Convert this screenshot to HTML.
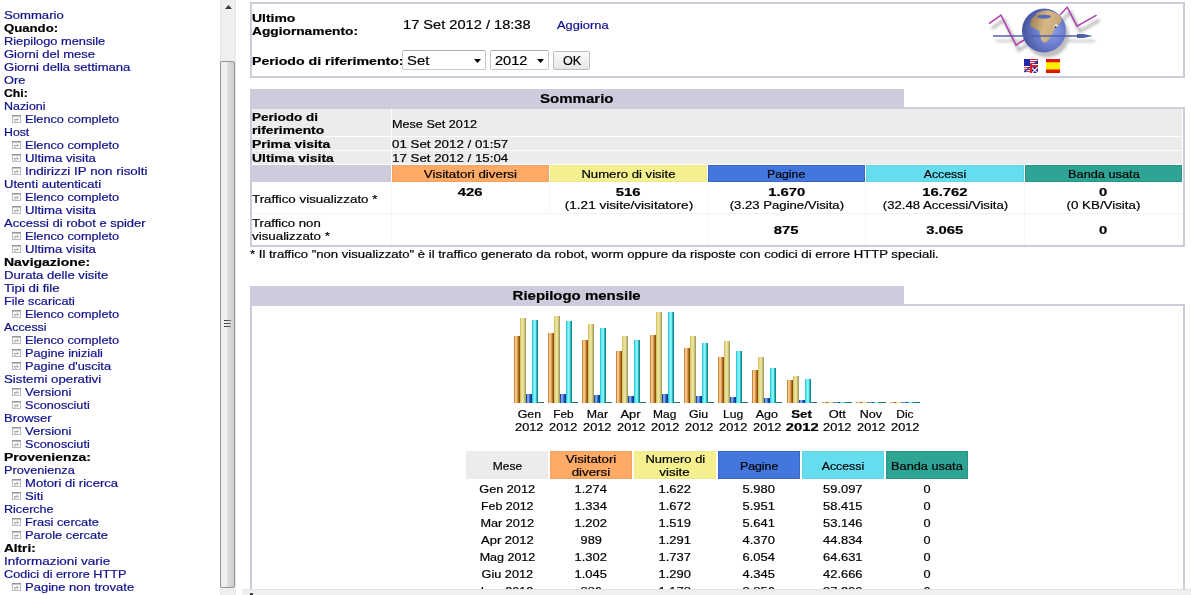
<!DOCTYPE html>
<html><head><meta charset="utf-8"><title>AWStats</title>
<style>
html,body{margin:0;padding:0;}
body{width:1191px;height:595px;overflow:hidden;position:relative;background:#fff;font-family:"Liberation Sans",sans-serif;}
.t{position:absolute;white-space:nowrap;line-height:13px;font-family:"Liberation Sans",sans-serif;}
.r{position:absolute;}
.t span{display:inline-block;-webkit-text-stroke:0.2px currentColor;}
.ic{position:absolute;width:9px;height:8px;}
</style></head><body>

<div class="t" style="left:4px;top:9.39px;font-size:11px;color:#10108a;"><span style="transform:scaleX(1.191);transform-origin:left">Sommario</span></div>
<div class="t" style="left:4px;top:22.39px;font-size:11px;color:#000;font-weight:bold;"><span style="transform:scaleX(1.196);transform-origin:left">Quando:</span></div>
<div class="t" style="left:4px;top:35.39px;font-size:11px;color:#10108a;"><span style="transform:scaleX(1.165);transform-origin:left">Riepilogo mensile</span></div>
<div class="t" style="left:4px;top:48.39px;font-size:11px;color:#10108a;"><span style="transform:scaleX(1.182);transform-origin:left">Giorni del mese</span></div>
<div class="t" style="left:4px;top:61.39px;font-size:11px;color:#10108a;"><span style="transform:scaleX(1.188);transform-origin:left">Giorni della settimana</span></div>
<div class="t" style="left:4px;top:74.39px;font-size:11px;color:#10108a;"><span style="transform:scaleX(1.159);transform-origin:left">Ore</span></div>
<div class="t" style="left:4px;top:87.39px;font-size:11px;color:#000;font-weight:bold;"><span style="transform:scaleX(1.109);transform-origin:left">Chi:</span></div>
<div class="t" style="left:4px;top:100.39px;font-size:11px;color:#10108a;"><span style="transform:scaleX(1.131);transform-origin:left">Nazioni</span></div>
<svg class="ic" style="left:12px;top:115px" width="9" height="8" viewBox="0 0 9 8"><rect x="0.5" y="0.5" width="8" height="7" fill="#fafafa" stroke="#bdbdbd"/><rect x="0" y="0" width="9" height="1.5" fill="#959595"/><path d="M2,4.5 H6.2 M4.6,3 L6.4,4.5 L4.6,6 M3,4.5 V7" stroke="#a8a8a8" stroke-width="0.9" fill="none"/></svg>
<div class="t" style="left:25px;top:113.39px;font-size:11px;color:#10108a;"><span style="transform:scaleX(1.157);transform-origin:left">Elenco completo</span></div>
<div class="t" style="left:4px;top:126.39px;font-size:11px;color:#10108a;"><span style="transform:scaleX(1.118);transform-origin:left">Host</span></div>
<svg class="ic" style="left:12px;top:141px" width="9" height="8" viewBox="0 0 9 8"><rect x="0.5" y="0.5" width="8" height="7" fill="#fafafa" stroke="#bdbdbd"/><rect x="0" y="0" width="9" height="1.5" fill="#959595"/><path d="M2,4.5 H6.2 M4.6,3 L6.4,4.5 L4.6,6 M3,4.5 V7" stroke="#a8a8a8" stroke-width="0.9" fill="none"/></svg>
<div class="t" style="left:25px;top:139.39px;font-size:11px;color:#10108a;"><span style="transform:scaleX(1.157);transform-origin:left">Elenco completo</span></div>
<svg class="ic" style="left:12px;top:154px" width="9" height="8" viewBox="0 0 9 8"><rect x="0.5" y="0.5" width="8" height="7" fill="#fafafa" stroke="#bdbdbd"/><rect x="0" y="0" width="9" height="1.5" fill="#959595"/><path d="M2,4.5 H6.2 M4.6,3 L6.4,4.5 L4.6,6 M3,4.5 V7" stroke="#a8a8a8" stroke-width="0.9" fill="none"/></svg>
<div class="t" style="left:25px;top:152.39px;font-size:11px;color:#10108a;"><span style="transform:scaleX(1.195);transform-origin:left">Ultima visita</span></div>
<svg class="ic" style="left:12px;top:167px" width="9" height="8" viewBox="0 0 9 8"><rect x="0.5" y="0.5" width="8" height="7" fill="#fafafa" stroke="#bdbdbd"/><rect x="0" y="0" width="9" height="1.5" fill="#959595"/><path d="M2,4.5 H6.2 M4.6,3 L6.4,4.5 L4.6,6 M3,4.5 V7" stroke="#a8a8a8" stroke-width="0.9" fill="none"/></svg>
<div class="t" style="left:25px;top:165.39px;font-size:11px;color:#10108a;"><span style="transform:scaleX(1.216);transform-origin:left">Indirizzi IP non risolti</span></div>
<div class="t" style="left:4px;top:178.39px;font-size:11px;color:#10108a;"><span style="transform:scaleX(1.185);transform-origin:left">Utenti autenticati</span></div>
<svg class="ic" style="left:12px;top:193px" width="9" height="8" viewBox="0 0 9 8"><rect x="0.5" y="0.5" width="8" height="7" fill="#fafafa" stroke="#bdbdbd"/><rect x="0" y="0" width="9" height="1.5" fill="#959595"/><path d="M2,4.5 H6.2 M4.6,3 L6.4,4.5 L4.6,6 M3,4.5 V7" stroke="#a8a8a8" stroke-width="0.9" fill="none"/></svg>
<div class="t" style="left:25px;top:191.39px;font-size:11px;color:#10108a;"><span style="transform:scaleX(1.157);transform-origin:left">Elenco completo</span></div>
<svg class="ic" style="left:12px;top:206px" width="9" height="8" viewBox="0 0 9 8"><rect x="0.5" y="0.5" width="8" height="7" fill="#fafafa" stroke="#bdbdbd"/><rect x="0" y="0" width="9" height="1.5" fill="#959595"/><path d="M2,4.5 H6.2 M4.6,3 L6.4,4.5 L4.6,6 M3,4.5 V7" stroke="#a8a8a8" stroke-width="0.9" fill="none"/></svg>
<div class="t" style="left:25px;top:204.39px;font-size:11px;color:#10108a;"><span style="transform:scaleX(1.195);transform-origin:left">Ultima visita</span></div>
<div class="t" style="left:4px;top:217.39px;font-size:11px;color:#10108a;"><span style="transform:scaleX(1.182);transform-origin:left">Accessi di robot e spider</span></div>
<svg class="ic" style="left:12px;top:232px" width="9" height="8" viewBox="0 0 9 8"><rect x="0.5" y="0.5" width="8" height="7" fill="#fafafa" stroke="#bdbdbd"/><rect x="0" y="0" width="9" height="1.5" fill="#959595"/><path d="M2,4.5 H6.2 M4.6,3 L6.4,4.5 L4.6,6 M3,4.5 V7" stroke="#a8a8a8" stroke-width="0.9" fill="none"/></svg>
<div class="t" style="left:25px;top:230.39px;font-size:11px;color:#10108a;"><span style="transform:scaleX(1.157);transform-origin:left">Elenco completo</span></div>
<svg class="ic" style="left:12px;top:245px" width="9" height="8" viewBox="0 0 9 8"><rect x="0.5" y="0.5" width="8" height="7" fill="#fafafa" stroke="#bdbdbd"/><rect x="0" y="0" width="9" height="1.5" fill="#959595"/><path d="M2,4.5 H6.2 M4.6,3 L6.4,4.5 L4.6,6 M3,4.5 V7" stroke="#a8a8a8" stroke-width="0.9" fill="none"/></svg>
<div class="t" style="left:25px;top:243.39px;font-size:11px;color:#10108a;"><span style="transform:scaleX(1.195);transform-origin:left">Ultima visita</span></div>
<div class="t" style="left:4px;top:256.39px;font-size:11px;color:#000;font-weight:bold;"><span style="transform:scaleX(1.271);transform-origin:left">Navigazione:</span></div>
<div class="t" style="left:4px;top:269.39px;font-size:11px;color:#10108a;"><span style="transform:scaleX(1.192);transform-origin:left">Durata delle visite</span></div>
<div class="t" style="left:4px;top:282.39px;font-size:11px;color:#10108a;"><span style="transform:scaleX(1.208);transform-origin:left">Tipi di file</span></div>
<div class="t" style="left:4px;top:295.39px;font-size:11px;color:#10108a;"><span style="transform:scaleX(1.159);transform-origin:left">File scaricati</span></div>
<svg class="ic" style="left:12px;top:310px" width="9" height="8" viewBox="0 0 9 8"><rect x="0.5" y="0.5" width="8" height="7" fill="#fafafa" stroke="#bdbdbd"/><rect x="0" y="0" width="9" height="1.5" fill="#959595"/><path d="M2,4.5 H6.2 M4.6,3 L6.4,4.5 L4.6,6 M3,4.5 V7" stroke="#a8a8a8" stroke-width="0.9" fill="none"/></svg>
<div class="t" style="left:25px;top:308.39px;font-size:11px;color:#10108a;"><span style="transform:scaleX(1.157);transform-origin:left">Elenco completo</span></div>
<div class="t" style="left:4px;top:321.39px;font-size:11px;color:#10108a;"><span style="transform:scaleX(1.121);transform-origin:left">Accessi</span></div>
<svg class="ic" style="left:12px;top:336px" width="9" height="8" viewBox="0 0 9 8"><rect x="0.5" y="0.5" width="8" height="7" fill="#fafafa" stroke="#bdbdbd"/><rect x="0" y="0" width="9" height="1.5" fill="#959595"/><path d="M2,4.5 H6.2 M4.6,3 L6.4,4.5 L4.6,6 M3,4.5 V7" stroke="#a8a8a8" stroke-width="0.9" fill="none"/></svg>
<div class="t" style="left:25px;top:334.39px;font-size:11px;color:#10108a;"><span style="transform:scaleX(1.157);transform-origin:left">Elenco completo</span></div>
<svg class="ic" style="left:12px;top:349px" width="9" height="8" viewBox="0 0 9 8"><rect x="0.5" y="0.5" width="8" height="7" fill="#fafafa" stroke="#bdbdbd"/><rect x="0" y="0" width="9" height="1.5" fill="#959595"/><path d="M2,4.5 H6.2 M4.6,3 L6.4,4.5 L4.6,6 M3,4.5 V7" stroke="#a8a8a8" stroke-width="0.9" fill="none"/></svg>
<div class="t" style="left:25px;top:347.39px;font-size:11px;color:#10108a;"><span style="transform:scaleX(1.158);transform-origin:left">Pagine iniziali</span></div>
<svg class="ic" style="left:12px;top:362px" width="9" height="8" viewBox="0 0 9 8"><rect x="0.5" y="0.5" width="8" height="7" fill="#fafafa" stroke="#bdbdbd"/><rect x="0" y="0" width="9" height="1.5" fill="#959595"/><path d="M2,4.5 H6.2 M4.6,3 L6.4,4.5 L4.6,6 M3,4.5 V7" stroke="#a8a8a8" stroke-width="0.9" fill="none"/></svg>
<div class="t" style="left:25px;top:360.39px;font-size:11px;color:#10108a;"><span style="transform:scaleX(1.158);transform-origin:left">Pagine d&#x27;uscita</span></div>
<div class="t" style="left:4px;top:373.39px;font-size:11px;color:#10108a;"><span style="transform:scaleX(1.204);transform-origin:left">Sistemi operativi</span></div>
<svg class="ic" style="left:12px;top:388px" width="9" height="8" viewBox="0 0 9 8"><rect x="0.5" y="0.5" width="8" height="7" fill="#fafafa" stroke="#bdbdbd"/><rect x="0" y="0" width="9" height="1.5" fill="#959595"/><path d="M2,4.5 H6.2 M4.6,3 L6.4,4.5 L4.6,6 M3,4.5 V7" stroke="#a8a8a8" stroke-width="0.9" fill="none"/></svg>
<div class="t" style="left:25px;top:386.39px;font-size:11px;color:#10108a;"><span style="transform:scaleX(1.189);transform-origin:left">Versioni</span></div>
<svg class="ic" style="left:12px;top:401px" width="9" height="8" viewBox="0 0 9 8"><rect x="0.5" y="0.5" width="8" height="7" fill="#fafafa" stroke="#bdbdbd"/><rect x="0" y="0" width="9" height="1.5" fill="#959595"/><path d="M2,4.5 H6.2 M4.6,3 L6.4,4.5 L4.6,6 M3,4.5 V7" stroke="#a8a8a8" stroke-width="0.9" fill="none"/></svg>
<div class="t" style="left:25px;top:399.39px;font-size:11px;color:#10108a;"><span style="transform:scaleX(1.151);transform-origin:left">Sconosciuti</span></div>
<div class="t" style="left:4px;top:412.39px;font-size:11px;color:#10108a;"><span style="transform:scaleX(1.179);transform-origin:left">Browser</span></div>
<svg class="ic" style="left:12px;top:427px" width="9" height="8" viewBox="0 0 9 8"><rect x="0.5" y="0.5" width="8" height="7" fill="#fafafa" stroke="#bdbdbd"/><rect x="0" y="0" width="9" height="1.5" fill="#959595"/><path d="M2,4.5 H6.2 M4.6,3 L6.4,4.5 L4.6,6 M3,4.5 V7" stroke="#a8a8a8" stroke-width="0.9" fill="none"/></svg>
<div class="t" style="left:25px;top:425.39px;font-size:11px;color:#10108a;"><span style="transform:scaleX(1.189);transform-origin:left">Versioni</span></div>
<svg class="ic" style="left:12px;top:440px" width="9" height="8" viewBox="0 0 9 8"><rect x="0.5" y="0.5" width="8" height="7" fill="#fafafa" stroke="#bdbdbd"/><rect x="0" y="0" width="9" height="1.5" fill="#959595"/><path d="M2,4.5 H6.2 M4.6,3 L6.4,4.5 L4.6,6 M3,4.5 V7" stroke="#a8a8a8" stroke-width="0.9" fill="none"/></svg>
<div class="t" style="left:25px;top:438.39px;font-size:11px;color:#10108a;"><span style="transform:scaleX(1.151);transform-origin:left">Sconosciuti</span></div>
<div class="t" style="left:4px;top:451.39px;font-size:11px;color:#000;font-weight:bold;"><span style="transform:scaleX(1.268);transform-origin:left">Provenienza:</span></div>
<div class="t" style="left:4px;top:464.39px;font-size:11px;color:#10108a;"><span style="transform:scaleX(1.158);transform-origin:left">Provenienza</span></div>
<svg class="ic" style="left:12px;top:479px" width="9" height="8" viewBox="0 0 9 8"><rect x="0.5" y="0.5" width="8" height="7" fill="#fafafa" stroke="#bdbdbd"/><rect x="0" y="0" width="9" height="1.5" fill="#959595"/><path d="M2,4.5 H6.2 M4.6,3 L6.4,4.5 L4.6,6 M3,4.5 V7" stroke="#a8a8a8" stroke-width="0.9" fill="none"/></svg>
<div class="t" style="left:25px;top:477.39px;font-size:11px;color:#10108a;"><span style="transform:scaleX(1.190);transform-origin:left">Motori di ricerca</span></div>
<svg class="ic" style="left:12px;top:492px" width="9" height="8" viewBox="0 0 9 8"><rect x="0.5" y="0.5" width="8" height="7" fill="#fafafa" stroke="#bdbdbd"/><rect x="0" y="0" width="9" height="1.5" fill="#959595"/><path d="M2,4.5 H6.2 M4.6,3 L6.4,4.5 L4.6,6 M3,4.5 V7" stroke="#a8a8a8" stroke-width="0.9" fill="none"/></svg>
<div class="t" style="left:25px;top:490.39px;font-size:11px;color:#10108a;"><span style="transform:scaleX(1.192);transform-origin:left">Siti</span></div>
<div class="t" style="left:4px;top:503.39px;font-size:11px;color:#10108a;"><span style="transform:scaleX(1.142);transform-origin:left">Ricerche</span></div>
<svg class="ic" style="left:12px;top:518px" width="9" height="8" viewBox="0 0 9 8"><rect x="0.5" y="0.5" width="8" height="7" fill="#fafafa" stroke="#bdbdbd"/><rect x="0" y="0" width="9" height="1.5" fill="#959595"/><path d="M2,4.5 H6.2 M4.6,3 L6.4,4.5 L4.6,6 M3,4.5 V7" stroke="#a8a8a8" stroke-width="0.9" fill="none"/></svg>
<div class="t" style="left:25px;top:516.39px;font-size:11px;color:#10108a;"><span style="transform:scaleX(1.162);transform-origin:left">Frasi cercate</span></div>
<svg class="ic" style="left:12px;top:531px" width="9" height="8" viewBox="0 0 9 8"><rect x="0.5" y="0.5" width="8" height="7" fill="#fafafa" stroke="#bdbdbd"/><rect x="0" y="0" width="9" height="1.5" fill="#959595"/><path d="M2,4.5 H6.2 M4.6,3 L6.4,4.5 L4.6,6 M3,4.5 V7" stroke="#a8a8a8" stroke-width="0.9" fill="none"/></svg>
<div class="t" style="left:25px;top:529.39px;font-size:11px;color:#10108a;"><span style="transform:scaleX(1.169);transform-origin:left">Parole cercate</span></div>
<div class="t" style="left:4px;top:542.39px;font-size:11px;color:#000;font-weight:bold;"><span style="transform:scaleX(1.234);transform-origin:left">Altri:</span></div>
<div class="t" style="left:4px;top:555.39px;font-size:11px;color:#10108a;"><span style="transform:scaleX(1.224);transform-origin:left">Informazioni varie</span></div>
<div class="t" style="left:4px;top:568.39px;font-size:11px;color:#10108a;"><span style="transform:scaleX(1.151);transform-origin:left">Codici di errore HTTP</span></div>
<svg class="ic" style="left:12px;top:583px" width="9" height="8" viewBox="0 0 9 8"><rect x="0.5" y="0.5" width="8" height="7" fill="#fafafa" stroke="#bdbdbd"/><rect x="0" y="0" width="9" height="1.5" fill="#959595"/><path d="M2,4.5 H6.2 M4.6,3 L6.4,4.5 L4.6,6 M3,4.5 V7" stroke="#a8a8a8" stroke-width="0.9" fill="none"/></svg>
<div class="t" style="left:25px;top:581.39px;font-size:11px;color:#10108a;"><span style="transform:scaleX(1.182);transform-origin:left">Pagine non trovate</span></div>
<div class="r" style="left:220px;top:0;width:16px;height:595px;background:linear-gradient(90deg,#e3e3e3 0,#eeeeee 2px,#f0f0f0 14px,#e8e8e8 16px);"></div>
<svg class="r" style="left:220px;top:0" width="16" height="14"><polygon points="5,9 12,9 8.5,5" fill="#3c3c3c"/></svg>
<div class="r" style="left:220px;top:61px;width:13px;height:525px;border:1px solid #949494;border-radius:2px;background:linear-gradient(90deg,#ececec 0,#f2f2f2 40%,#d9d9dc 55%,#cfd0d4 100%);"></div>
<div class="r" style="left:224px;top:320px;width:7px;height:1px;background:linear-gradient(90deg,#303030,#606060 60%,#8a8a8a);"></div>
<div class="r" style="left:224px;top:323px;width:7px;height:1px;background:linear-gradient(90deg,#303030,#606060 60%,#8a8a8a);"></div>
<div class="r" style="left:224px;top:326px;width:7px;height:1px;background:linear-gradient(90deg,#303030,#606060 60%,#8a8a8a);"></div>
<div class="r" style="left:250px;top:2px;width:931px;height:72px;border:2px solid #CCCCDD;"></div>
<div class="t" style="left:252px;top:11.69px;font-size:11px;color:#000;font-weight:bold;"><span style="transform:scaleX(1.264);transform-origin:left">Ultimo</span></div>
<div class="t" style="left:252px;top:24.69px;font-size:11px;color:#000;font-weight:bold;"><span style="transform:scaleX(1.248);transform-origin:left">Aggiornamento:</span></div>
<div class="t" style="left:402.5px;top:19.34px;font-size:12px;color:#000;"><span style="transform:scaleX(1.218);transform-origin:left">17 Set 2012 / 18:38</span></div>
<div class="t" style="left:557px;top:19.19px;font-size:11px;color:#10108a;"><span style="transform:scaleX(1.171);transform-origin:left">Aggiorna</span></div>
<div class="t" style="left:252px;top:54.69px;font-size:11px;color:#000;font-weight:bold;"><span style="transform:scaleX(1.285);transform-origin:left">Periodo di riferimento:</span></div>
<div class="r" style="left:402px;top:50px;width:82px;height:18px;border:1px solid #c9c9c9;border-top-color:#acacac;border-radius:2px;background:#fff;"></div>
<div class="t" style="left:407px;top:54.00px;font-size:13px;color:#000;"><span style="transform:scaleX(1.141);transform-origin:left">Set</span></div>
<svg class="r" style="left:474px;top:58px" width="8" height="6"><polygon points="0,1 7,1 3.5,5" fill="#000"/></svg>
<div class="r" style="left:490px;top:50px;width:57px;height:18px;border:1px solid #c9c9c9;border-top-color:#acacac;border-radius:2px;background:#fff;"></div>
<div class="t" style="left:495px;top:54.00px;font-size:13px;color:#000;"><span style="transform:scaleX(1.119);transform-origin:left">2012</span></div>
<svg class="r" style="left:537px;top:58px" width="8" height="6"><polygon points="0,1 7,1 3.5,5" fill="#000"/></svg>
<div class="r" style="left:553px;top:51px;width:35px;height:17px;border:1px solid #bdbdbd;border-radius:2px;background:linear-gradient(#fbfbfb,#f0f0f0 50%,#e6e6e6);"></div>
<div class="t" style="left:563px;top:54.00px;font-size:13px;color:#000;"><span style="transform:scaleX(0.974);transform-origin:left">OK</span></div>
<svg class="r" style="left:985px;top:3px" width="118" height="56" viewBox="0 0 118 56">
<defs>
<radialGradient id="gl" cx="0.66" cy="0.52" r="0.78"><stop offset="0" stop-color="#8c9ef0"/><stop offset="0.5" stop-color="#6676c6"/><stop offset="1" stop-color="#36438a"/></radialGradient>
<linearGradient id="ld" x1="0" y1="0" x2="1" y2="0.3"><stop offset="0" stop-color="#98784c"/><stop offset="0.55" stop-color="#d6b888"/><stop offset="1" stop-color="#c4a678"/></linearGradient>
<filter id="bl" x="-20%" y="-30%" width="140%" height="160%"><feGaussianBlur stdDeviation="1.8"/></filter>
</defs>
<g opacity="0.45" filter="url(#bl)" transform="translate(3,5)">
<polyline points="4,20.6 16,12.1 31,42.2 39,37 75,12.1 82.2,4.2 92,23.2 111.6,12.1" fill="none" stroke="#606060" stroke-width="3"/>
<circle cx="59" cy="27.5" r="22" fill="#707070"/>
<line x1="8" y1="33" x2="107" y2="33" stroke="#707070" stroke-width="2"/>
</g>
<polyline points="4,20.6 16,12.1 31,42.2 39,37" fill="none" stroke="#b040b0" stroke-width="1.5"/>
<polyline points="75,12.1 82.2,4.2 92,23.2 111.6,12.1" fill="none" stroke="#b040b0" stroke-width="1.5"/>
<circle cx="59" cy="27.5" r="22" fill="url(#gl)"/>
<polygon points="50.7,12.8 52.5,10.1 57.5,8.3 62.9,7.8 68.4,9.2 73.8,11.9 76.6,15.5 75.6,18.2 72,23.7 69.3,25.5 68.4,28.2 65.7,33.7 62,38.2 59.3,39.6 57.5,38.2 55.7,33.7 54.8,28.2 51.1,25.5 46.6,23.7 45.7,21 46.6,16.4" fill="url(#ld)" stroke="url(#ld)" stroke-width="0.8" stroke-linejoin="round"/>
<ellipse cx="59" cy="13.6" rx="7" ry="1.9" fill="#5668b8"/>
<circle cx="71.1" cy="23" r="1.8" fill="#eef0ff" opacity="0.9"/>
<circle cx="70.8" cy="24" r="0.9" fill="#303050"/>
<line x1="8" y1="33" x2="100" y2="33" stroke="#5060a8" stroke-width="1.7"/>
<polygon points="92,31 98.5,31 107.7,33 98.5,35 92,35" fill="#5060a8"/>
</svg>
<svg class="r" style="left:1024px;top:59px" width="14" height="14" viewBox="0 0 14 14">
<rect width="14" height="14" fill="#f6f0f4"/>
<rect x="6" y="0" width="8" height="1" fill="#d02838"/><rect x="6" y="2" width="8" height="1" fill="#d02838"/><rect x="6" y="4" width="8" height="1" fill="#d02838"/>
<polygon points="9,5 14,1 14,5" fill="#2a2a98"/>
<rect x="7" y="8" width="7" height="6" fill="#2a2a98"/>
<path d="M7,8 L14,14 M14,8 L8,14" stroke="#f4e8f0" stroke-width="1.3"/>
<rect x="0" y="8" width="6" height="1" fill="#d04858"/><rect x="0" y="10" width="6" height="1" fill="#d04858"/><rect x="0" y="12" width="6" height="1" fill="#d04858"/>
<path d="M0,13 L6,8" stroke="#2a2a98" stroke-width="1.2"/>
<rect x="0" y="0" width="6" height="7" fill="#2424a8"/>
<rect x="6" y="6" width="8" height="2" fill="#e01c28"/>
<rect x="6" y="5" width="2" height="9" fill="#e01c28"/>
</svg>
<svg class="r" style="left:1046px;top:59px" width="14" height="14" viewBox="0 0 14 14">
<rect width="14" height="14" fill="#e01808"/><rect y="3.3" width="14" height="7.2" fill="#fff000"/>
</svg>
<div class="r" style="left:250px;top:89px;width:654px;height:18px;background:#CCCCDD;"></div>
<div class="t" style="left:250px;top:92.00px;font-size:13px;color:#000;font-weight:bold;width:654px;text-align:center;"><span style="transform:scaleX(1.156);transform-origin:center">Sommario</span></div>
<div class="r" style="left:250px;top:107px;width:931px;height:136px;border:2px solid #CCCCDD;background:#fff;"></div>
<div class="r" style="left:252px;top:109px;width:139px;height:27px;background:#ECECEC;"></div>
<div class="r" style="left:392px;top:109px;width:790px;height:27px;background:#ECECEC;"></div>
<div class="r" style="left:252px;top:137px;width:139px;height:13px;background:#ECECEC;"></div>
<div class="r" style="left:392px;top:137px;width:790px;height:13px;background:#ECECEC;"></div>
<div class="r" style="left:252px;top:151px;width:139px;height:13px;background:#ECECEC;"></div>
<div class="r" style="left:392px;top:151px;width:790px;height:13px;background:#ECECEC;"></div>
<div class="r" style="left:252px;top:165px;width:139px;height:17px;background:#CCCCDD;box-shadow:inset 0 0 0 1px rgba(0,0,0,0);"></div>
<div class="r" style="left:392px;top:165px;width:157px;height:17px;background:#FFAA66;box-shadow:inset 0 0 0 1px rgba(0,0,0,0.05);"></div>
<div class="r" style="left:550px;top:165px;width:157px;height:17px;background:#F4F090;box-shadow:inset 0 0 0 1px rgba(0,0,0,0.02);"></div>
<div class="r" style="left:708px;top:165px;width:157px;height:17px;background:#4477DD;box-shadow:inset 0 0 0 1px rgba(0,0,0,0.13);"></div>
<div class="r" style="left:866px;top:165px;width:158px;height:17px;background:#66DDEE;box-shadow:inset 0 0 0 1px rgba(0,0,0,0.04);"></div>
<div class="r" style="left:1025px;top:165px;width:157px;height:17px;background:#2EA495;box-shadow:inset 0 0 0 1px rgba(0,0,0,0.1);"></div>
<div class="r" style="left:252px;top:213px;width:930px;height:1px;background:#F3F3F3;"></div>
<div class="r" style="left:391px;top:182px;width:1px;height:31px;background:#F6F6F6;"></div>
<div class="r" style="left:549px;top:182px;width:1px;height:31px;background:#F6F6F6;"></div>
<div class="r" style="left:707px;top:182px;width:1px;height:31px;background:#F6F6F6;"></div>
<div class="r" style="left:865px;top:182px;width:1px;height:31px;background:#F6F6F6;"></div>
<div class="r" style="left:1024px;top:182px;width:1px;height:31px;background:#F6F6F6;"></div>
<div class="r" style="left:391px;top:214px;width:1px;height:31px;background:#F6F6F6;"></div>
<div class="r" style="left:707px;top:214px;width:1px;height:31px;background:#F6F6F6;"></div>
<div class="r" style="left:865px;top:214px;width:1px;height:31px;background:#F6F6F6;"></div>
<div class="r" style="left:1024px;top:214px;width:1px;height:31px;background:#F6F6F6;"></div>
<div class="t" style="left:252px;top:111.19px;font-size:11px;color:#000;font-weight:bold;"><span style="transform:scaleX(1.225);transform-origin:left">Periodo di</span></div>
<div class="t" style="left:252px;top:124.19px;font-size:11px;color:#000;font-weight:bold;"><span style="transform:scaleX(1.255);transform-origin:left">riferimento</span></div>
<div class="t" style="left:392px;top:117.69px;font-size:11px;color:#000;"><span style="transform:scaleX(1.148);transform-origin:left">Mese Set 2012</span></div>
<div class="t" style="left:252px;top:138.19px;font-size:11px;color:#000;font-weight:bold;"><span style="transform:scaleX(1.265);transform-origin:left">Prima visita</span></div>
<div class="t" style="left:392px;top:137.69px;font-size:11px;color:#000;"><span style="transform:scaleX(1.210);transform-origin:left">01 Set 2012 / 01:57</span></div>
<div class="t" style="left:252px;top:152.19px;font-size:11px;color:#000;font-weight:bold;"><span style="transform:scaleX(1.262);transform-origin:left">Ultima visita</span></div>
<div class="t" style="left:392px;top:151.69px;font-size:11px;color:#000;"><span style="transform:scaleX(1.210);transform-origin:left">17 Set 2012 / 15:04</span></div>
<div class="t" style="left:392px;top:167.99px;font-size:11px;color:#000;width:157px;text-align:center;"><span style="transform:scaleX(1.212);transform-origin:center">Visitatori diversi</span></div>
<div class="t" style="left:550px;top:167.99px;font-size:11px;color:#000;width:157px;text-align:center;"><span style="transform:scaleX(1.193);transform-origin:center">Numero di visite</span></div>
<div class="t" style="left:708px;top:167.99px;font-size:11px;color:#000;width:157px;text-align:center;"><span style="transform:scaleX(1.122);transform-origin:center">Pagine</span></div>
<div class="t" style="left:866px;top:167.99px;font-size:11px;color:#000;width:158px;text-align:center;"><span style="transform:scaleX(1.121);transform-origin:center">Accessi</span></div>
<div class="t" style="left:1025px;top:167.99px;font-size:11px;color:#000;width:157px;text-align:center;"><span style="transform:scaleX(1.162);transform-origin:center">Banda usata</span></div>
<div class="t" style="left:252px;top:192.69px;font-size:11px;color:#000;"><span style="transform:scaleX(1.214);transform-origin:left">Traffico visualizzato *</span></div>
<div class="t" style="left:392px;top:185.69px;font-size:11px;color:#000;font-weight:bold;width:157px;text-align:center;"><span style="transform:scaleX(1.345);transform-origin:center">426</span></div>
<div class="t" style="left:550px;top:185.69px;font-size:11px;color:#000;font-weight:bold;width:157px;text-align:center;"><span style="transform:scaleX(1.345);transform-origin:center">516</span></div>
<div class="t" style="left:550px;top:198.69px;font-size:11px;color:#000;width:157px;text-align:center;"><span style="transform:scaleX(1.236);transform-origin:center">(1.21 visite/visitatore)</span></div>
<div class="t" style="left:708px;top:185.69px;font-size:11px;color:#000;font-weight:bold;width:157px;text-align:center;"><span style="transform:scaleX(1.345);transform-origin:center">1.670</span></div>
<div class="t" style="left:708px;top:198.69px;font-size:11px;color:#000;width:157px;text-align:center;"><span style="transform:scaleX(1.193);transform-origin:center">(3.23 Pagine/Visita)</span></div>
<div class="t" style="left:866px;top:185.69px;font-size:11px;color:#000;font-weight:bold;width:158px;text-align:center;"><span style="transform:scaleX(1.345);transform-origin:center">16.762</span></div>
<div class="t" style="left:866px;top:198.69px;font-size:11px;color:#000;width:158px;text-align:center;"><span style="transform:scaleX(1.195);transform-origin:center">(32.48 Accessi/Visita)</span></div>
<div class="t" style="left:1025px;top:185.69px;font-size:11px;color:#000;font-weight:bold;width:157px;text-align:center;"><span style="transform:scaleX(1.345);transform-origin:center">0</span></div>
<div class="t" style="left:1025px;top:198.69px;font-size:11px;color:#000;width:157px;text-align:center;"><span style="transform:scaleX(1.212);transform-origin:center">(0 KB/Visita)</span></div>
<div class="t" style="left:252px;top:216.69px;font-size:11px;color:#000;"><span style="transform:scaleX(1.196);transform-origin:left">Traffico non</span></div>
<div class="t" style="left:252px;top:229.69px;font-size:11px;color:#000;"><span style="transform:scaleX(1.213);transform-origin:left">visualizzato *</span></div>
<div class="t" style="left:708px;top:223.69px;font-size:11px;color:#000;font-weight:bold;width:157px;text-align:center;"><span style="transform:scaleX(1.345);transform-origin:center">875</span></div>
<div class="t" style="left:866px;top:223.69px;font-size:11px;color:#000;font-weight:bold;width:158px;text-align:center;"><span style="transform:scaleX(1.345);transform-origin:center">3.065</span></div>
<div class="t" style="left:1025px;top:223.69px;font-size:11px;color:#000;font-weight:bold;width:157px;text-align:center;"><span style="transform:scaleX(1.345);transform-origin:center">0</span></div>
<div class="t" style="left:250px;top:247.69px;font-size:11px;color:#000;"><span style="transform:scaleX(1.191);transform-origin:left">* Il traffico &quot;non visualizzato&quot; è il traffico generato da robot, worm oppure da risposte con codici di errore HTTP speciali.</span></div>
<div class="r" style="left:250px;top:286px;width:654px;height:18px;background:#CCCCDD;"></div>
<div class="t" style="left:250px;top:289.00px;font-size:13px;color:#000;font-weight:bold;width:654px;text-align:center;"><span style="transform:scaleX(1.151);transform-origin:center">Riepilogo mensile</span></div>
<div class="r" style="left:250px;top:304px;width:931px;height:400px;border:2px solid #CCCCDD;background:#fff;"></div>
<div class="r" style="left:514px;top:336px;width:6px;height:67px;background:linear-gradient(90deg,#c48a48 0,#c48a48 1px,#ffc274 1px,#ffc274 2px,#f2c488 2px,#f2c488 3px,#d99a55 3px,#d99a55 4px,#b46e28 4px,#b46e28 5px,#8c5306 5px);"></div>
<div class="r" style="left:520px;top:318px;width:6px;height:85px;background:linear-gradient(90deg,#d2c26c 0,#d2c26c 1px,#e8dc84 1px,#e8dc84 2px,#eae49c 2px,#eae49c 3px,#e0dca0 3px,#e0dca0 4px,#c8c070 4px,#c8c070 5px,#a8a060 5px);"></div>
<div class="r" style="left:526px;top:394px;width:6px;height:9px;background:linear-gradient(90deg,#2a4c98 0,#2a4c98 1px,#6a9cf4 1px,#6a9cf4 2px,#7ca4f0 2px,#7ca4f0 3px,#4474d4 3px,#4474d4 4px,#1a4cb0 4px,#1a4cb0 5px,#003c90 5px);"></div>
<div class="r" style="left:532px;top:320px;width:6px;height:83px;background:linear-gradient(90deg,#40c4d0 0,#40c4d0 1px,#58ecf2 1px,#58ecf2 2px,#78fcfc 2px,#78fcfc 3px,#84e8ee 3px,#84e8ee 4px,#30b8c0 4px,#30b8c0 5px,#148c90 5px);"></div>
<div class="r" style="left:538px;top:402px;width:6px;height:1px;background:linear-gradient(90deg,#2a8070 0,#206858 100%);"></div>
<div class="t" style="left:511px;top:407.69px;font-size:11px;color:#000;width:36px;text-align:center;"><span style="transform:scaleX(1.118);transform-origin:center">Gen</span></div>
<div class="t" style="left:511px;top:420.69px;font-size:11px;color:#000;width:36px;text-align:center;"><span style="transform:scaleX(1.157);transform-origin:center">2012</span></div>
<div class="r" style="left:548px;top:333px;width:6px;height:70px;background:linear-gradient(90deg,#c48a48 0,#c48a48 1px,#ffc274 1px,#ffc274 2px,#f2c488 2px,#f2c488 3px,#d99a55 3px,#d99a55 4px,#b46e28 4px,#b46e28 5px,#8c5306 5px);"></div>
<div class="r" style="left:554px;top:316px;width:6px;height:87px;background:linear-gradient(90deg,#d2c26c 0,#d2c26c 1px,#e8dc84 1px,#e8dc84 2px,#eae49c 2px,#eae49c 3px,#e0dca0 3px,#e0dca0 4px,#c8c070 4px,#c8c070 5px,#a8a060 5px);"></div>
<div class="r" style="left:560px;top:394px;width:6px;height:9px;background:linear-gradient(90deg,#2a4c98 0,#2a4c98 1px,#6a9cf4 1px,#6a9cf4 2px,#7ca4f0 2px,#7ca4f0 3px,#4474d4 3px,#4474d4 4px,#1a4cb0 4px,#1a4cb0 5px,#003c90 5px);"></div>
<div class="r" style="left:566px;top:321px;width:6px;height:82px;background:linear-gradient(90deg,#40c4d0 0,#40c4d0 1px,#58ecf2 1px,#58ecf2 2px,#78fcfc 2px,#78fcfc 3px,#84e8ee 3px,#84e8ee 4px,#30b8c0 4px,#30b8c0 5px,#148c90 5px);"></div>
<div class="r" style="left:572px;top:402px;width:6px;height:1px;background:linear-gradient(90deg,#2a8070 0,#206858 100%);"></div>
<div class="t" style="left:545px;top:407.69px;font-size:11px;color:#000;width:36px;text-align:center;"><span style="transform:scaleX(1.067);transform-origin:center">Feb</span></div>
<div class="t" style="left:545px;top:420.69px;font-size:11px;color:#000;width:36px;text-align:center;"><span style="transform:scaleX(1.157);transform-origin:center">2012</span></div>
<div class="r" style="left:582px;top:340px;width:6px;height:63px;background:linear-gradient(90deg,#c48a48 0,#c48a48 1px,#ffc274 1px,#ffc274 2px,#f2c488 2px,#f2c488 3px,#d99a55 3px,#d99a55 4px,#b46e28 4px,#b46e28 5px,#8c5306 5px);"></div>
<div class="r" style="left:588px;top:324px;width:6px;height:79px;background:linear-gradient(90deg,#d2c26c 0,#d2c26c 1px,#e8dc84 1px,#e8dc84 2px,#eae49c 2px,#eae49c 3px,#e0dca0 3px,#e0dca0 4px,#c8c070 4px,#c8c070 5px,#a8a060 5px);"></div>
<div class="r" style="left:594px;top:395px;width:6px;height:8px;background:linear-gradient(90deg,#2a4c98 0,#2a4c98 1px,#6a9cf4 1px,#6a9cf4 2px,#7ca4f0 2px,#7ca4f0 3px,#4474d4 3px,#4474d4 4px,#1a4cb0 4px,#1a4cb0 5px,#003c90 5px);"></div>
<div class="r" style="left:600px;top:328px;width:6px;height:75px;background:linear-gradient(90deg,#40c4d0 0,#40c4d0 1px,#58ecf2 1px,#58ecf2 2px,#78fcfc 2px,#78fcfc 3px,#84e8ee 3px,#84e8ee 4px,#30b8c0 4px,#30b8c0 5px,#148c90 5px);"></div>
<div class="r" style="left:606px;top:402px;width:6px;height:1px;background:linear-gradient(90deg,#2a8070 0,#206858 100%);"></div>
<div class="t" style="left:579px;top:407.69px;font-size:11px;color:#000;width:36px;text-align:center;"><span style="transform:scaleX(1.122);transform-origin:center">Mar</span></div>
<div class="t" style="left:579px;top:420.69px;font-size:11px;color:#000;width:36px;text-align:center;"><span style="transform:scaleX(1.157);transform-origin:center">2012</span></div>
<div class="r" style="left:616px;top:351px;width:6px;height:52px;background:linear-gradient(90deg,#c48a48 0,#c48a48 1px,#ffc274 1px,#ffc274 2px,#f2c488 2px,#f2c488 3px,#d99a55 3px,#d99a55 4px,#b46e28 4px,#b46e28 5px,#8c5306 5px);"></div>
<div class="r" style="left:622px;top:336px;width:6px;height:67px;background:linear-gradient(90deg,#d2c26c 0,#d2c26c 1px,#e8dc84 1px,#e8dc84 2px,#eae49c 2px,#eae49c 3px,#e0dca0 3px,#e0dca0 4px,#c8c070 4px,#c8c070 5px,#a8a060 5px);"></div>
<div class="r" style="left:628px;top:396px;width:6px;height:7px;background:linear-gradient(90deg,#2a4c98 0,#2a4c98 1px,#6a9cf4 1px,#6a9cf4 2px,#7ca4f0 2px,#7ca4f0 3px,#4474d4 3px,#4474d4 4px,#1a4cb0 4px,#1a4cb0 5px,#003c90 5px);"></div>
<div class="r" style="left:634px;top:340px;width:6px;height:63px;background:linear-gradient(90deg,#40c4d0 0,#40c4d0 1px,#58ecf2 1px,#58ecf2 2px,#78fcfc 2px,#78fcfc 3px,#84e8ee 3px,#84e8ee 4px,#30b8c0 4px,#30b8c0 5px,#148c90 5px);"></div>
<div class="r" style="left:640px;top:402px;width:6px;height:1px;background:linear-gradient(90deg,#2a8070 0,#206858 100%);"></div>
<div class="t" style="left:613px;top:407.69px;font-size:11px;color:#000;width:36px;text-align:center;"><span style="transform:scaleX(1.182);transform-origin:center">Apr</span></div>
<div class="t" style="left:613px;top:420.69px;font-size:11px;color:#000;width:36px;text-align:center;"><span style="transform:scaleX(1.157);transform-origin:center">2012</span></div>
<div class="r" style="left:650px;top:335px;width:6px;height:68px;background:linear-gradient(90deg,#c48a48 0,#c48a48 1px,#ffc274 1px,#ffc274 2px,#f2c488 2px,#f2c488 3px,#d99a55 3px,#d99a55 4px,#b46e28 4px,#b46e28 5px,#8c5306 5px);"></div>
<div class="r" style="left:656px;top:312px;width:6px;height:91px;background:linear-gradient(90deg,#d2c26c 0,#d2c26c 1px,#e8dc84 1px,#e8dc84 2px,#eae49c 2px,#eae49c 3px,#e0dca0 3px,#e0dca0 4px,#c8c070 4px,#c8c070 5px,#a8a060 5px);"></div>
<div class="r" style="left:662px;top:394px;width:6px;height:9px;background:linear-gradient(90deg,#2a4c98 0,#2a4c98 1px,#6a9cf4 1px,#6a9cf4 2px,#7ca4f0 2px,#7ca4f0 3px,#4474d4 3px,#4474d4 4px,#1a4cb0 4px,#1a4cb0 5px,#003c90 5px);"></div>
<div class="r" style="left:668px;top:312px;width:6px;height:91px;background:linear-gradient(90deg,#40c4d0 0,#40c4d0 1px,#58ecf2 1px,#58ecf2 2px,#78fcfc 2px,#78fcfc 3px,#84e8ee 3px,#84e8ee 4px,#30b8c0 4px,#30b8c0 5px,#148c90 5px);"></div>
<div class="r" style="left:674px;top:402px;width:6px;height:1px;background:linear-gradient(90deg,#2a8070 0,#206858 100%);"></div>
<div class="t" style="left:647px;top:407.69px;font-size:11px;color:#000;width:36px;text-align:center;"><span style="transform:scaleX(1.087);transform-origin:center">Mag</span></div>
<div class="t" style="left:647px;top:420.69px;font-size:11px;color:#000;width:36px;text-align:center;"><span style="transform:scaleX(1.157);transform-origin:center">2012</span></div>
<div class="r" style="left:684px;top:348px;width:6px;height:55px;background:linear-gradient(90deg,#c48a48 0,#c48a48 1px,#ffc274 1px,#ffc274 2px,#f2c488 2px,#f2c488 3px,#d99a55 3px,#d99a55 4px,#b46e28 4px,#b46e28 5px,#8c5306 5px);"></div>
<div class="r" style="left:690px;top:336px;width:6px;height:67px;background:linear-gradient(90deg,#d2c26c 0,#d2c26c 1px,#e8dc84 1px,#e8dc84 2px,#eae49c 2px,#eae49c 3px,#e0dca0 3px,#e0dca0 4px,#c8c070 4px,#c8c070 5px,#a8a060 5px);"></div>
<div class="r" style="left:696px;top:396px;width:6px;height:7px;background:linear-gradient(90deg,#2a4c98 0,#2a4c98 1px,#6a9cf4 1px,#6a9cf4 2px,#7ca4f0 2px,#7ca4f0 3px,#4474d4 3px,#4474d4 4px,#1a4cb0 4px,#1a4cb0 5px,#003c90 5px);"></div>
<div class="r" style="left:702px;top:343px;width:6px;height:60px;background:linear-gradient(90deg,#40c4d0 0,#40c4d0 1px,#58ecf2 1px,#58ecf2 2px,#78fcfc 2px,#78fcfc 3px,#84e8ee 3px,#84e8ee 4px,#30b8c0 4px,#30b8c0 5px,#148c90 5px);"></div>
<div class="r" style="left:708px;top:402px;width:6px;height:1px;background:linear-gradient(90deg,#2a8070 0,#206858 100%);"></div>
<div class="t" style="left:681px;top:407.69px;font-size:11px;color:#000;width:36px;text-align:center;"><span style="transform:scaleX(1.123);transform-origin:center">Giu</span></div>
<div class="t" style="left:681px;top:420.69px;font-size:11px;color:#000;width:36px;text-align:center;"><span style="transform:scaleX(1.157);transform-origin:center">2012</span></div>
<div class="r" style="left:718px;top:357px;width:6px;height:46px;background:linear-gradient(90deg,#c48a48 0,#c48a48 1px,#ffc274 1px,#ffc274 2px,#f2c488 2px,#f2c488 3px,#d99a55 3px,#d99a55 4px,#b46e28 4px,#b46e28 5px,#8c5306 5px);"></div>
<div class="r" style="left:724px;top:341px;width:6px;height:62px;background:linear-gradient(90deg,#d2c26c 0,#d2c26c 1px,#e8dc84 1px,#e8dc84 2px,#eae49c 2px,#eae49c 3px,#e0dca0 3px,#e0dca0 4px,#c8c070 4px,#c8c070 5px,#a8a060 5px);"></div>
<div class="r" style="left:730px;top:397px;width:6px;height:6px;background:linear-gradient(90deg,#2a4c98 0,#2a4c98 1px,#6a9cf4 1px,#6a9cf4 2px,#7ca4f0 2px,#7ca4f0 3px,#4474d4 3px,#4474d4 4px,#1a4cb0 4px,#1a4cb0 5px,#003c90 5px);"></div>
<div class="r" style="left:736px;top:351px;width:6px;height:52px;background:linear-gradient(90deg,#40c4d0 0,#40c4d0 1px,#58ecf2 1px,#58ecf2 2px,#78fcfc 2px,#78fcfc 3px,#84e8ee 3px,#84e8ee 4px,#30b8c0 4px,#30b8c0 5px,#148c90 5px);"></div>
<div class="r" style="left:742px;top:402px;width:6px;height:1px;background:linear-gradient(90deg,#2a8070 0,#206858 100%);"></div>
<div class="t" style="left:715px;top:407.69px;font-size:11px;color:#000;width:36px;text-align:center;"><span style="transform:scaleX(1.101);transform-origin:center">Lug</span></div>
<div class="t" style="left:715px;top:420.69px;font-size:11px;color:#000;width:36px;text-align:center;"><span style="transform:scaleX(1.157);transform-origin:center">2012</span></div>
<div class="r" style="left:752px;top:370px;width:6px;height:33px;background:linear-gradient(90deg,#c48a48 0,#c48a48 1px,#ffc274 1px,#ffc274 2px,#f2c488 2px,#f2c488 3px,#d99a55 3px,#d99a55 4px,#b46e28 4px,#b46e28 5px,#8c5306 5px);"></div>
<div class="r" style="left:758px;top:357px;width:6px;height:46px;background:linear-gradient(90deg,#d2c26c 0,#d2c26c 1px,#e8dc84 1px,#e8dc84 2px,#eae49c 2px,#eae49c 3px,#e0dca0 3px,#e0dca0 4px,#c8c070 4px,#c8c070 5px,#a8a060 5px);"></div>
<div class="r" style="left:764px;top:398px;width:6px;height:5px;background:linear-gradient(90deg,#2a4c98 0,#2a4c98 1px,#6a9cf4 1px,#6a9cf4 2px,#7ca4f0 2px,#7ca4f0 3px,#4474d4 3px,#4474d4 4px,#1a4cb0 4px,#1a4cb0 5px,#003c90 5px);"></div>
<div class="r" style="left:770px;top:368px;width:6px;height:35px;background:linear-gradient(90deg,#40c4d0 0,#40c4d0 1px,#58ecf2 1px,#58ecf2 2px,#78fcfc 2px,#78fcfc 3px,#84e8ee 3px,#84e8ee 4px,#30b8c0 4px,#30b8c0 5px,#148c90 5px);"></div>
<div class="r" style="left:776px;top:402px;width:6px;height:1px;background:linear-gradient(90deg,#2a8070 0,#206858 100%);"></div>
<div class="t" style="left:749px;top:407.69px;font-size:11px;color:#000;width:36px;text-align:center;"><span style="transform:scaleX(1.136);transform-origin:center">Ago</span></div>
<div class="t" style="left:749px;top:420.69px;font-size:11px;color:#000;width:36px;text-align:center;"><span style="transform:scaleX(1.157);transform-origin:center">2012</span></div>
<div class="r" style="left:787px;top:380px;width:6px;height:23px;background:linear-gradient(90deg,#c48a48 0,#c48a48 1px,#ffc274 1px,#ffc274 2px,#f2c488 2px,#f2c488 3px,#d99a55 3px,#d99a55 4px,#b46e28 4px,#b46e28 5px,#8c5306 5px);"></div>
<div class="r" style="left:793px;top:376px;width:6px;height:27px;background:linear-gradient(90deg,#d2c26c 0,#d2c26c 1px,#e8dc84 1px,#e8dc84 2px,#eae49c 2px,#eae49c 3px,#e0dca0 3px,#e0dca0 4px,#c8c070 4px,#c8c070 5px,#a8a060 5px);"></div>
<div class="r" style="left:799px;top:400px;width:6px;height:3px;background:linear-gradient(90deg,#2a4c98 0,#2a4c98 1px,#6a9cf4 1px,#6a9cf4 2px,#7ca4f0 2px,#7ca4f0 3px,#4474d4 3px,#4474d4 4px,#1a4cb0 4px,#1a4cb0 5px,#003c90 5px);"></div>
<div class="r" style="left:805px;top:379px;width:6px;height:24px;background:linear-gradient(90deg,#40c4d0 0,#40c4d0 1px,#58ecf2 1px,#58ecf2 2px,#78fcfc 2px,#78fcfc 3px,#84e8ee 3px,#84e8ee 4px,#30b8c0 4px,#30b8c0 5px,#148c90 5px);"></div>
<div class="r" style="left:811px;top:402px;width:6px;height:1px;background:linear-gradient(90deg,#2a8070 0,#206858 100%);"></div>
<div class="t" style="left:784px;top:407.69px;font-size:11px;color:#000;font-weight:bold;width:36px;text-align:center;"><span style="transform:scaleX(1.203);transform-origin:center">Set</span></div>
<div class="t" style="left:784px;top:420.69px;font-size:11px;color:#000;font-weight:bold;width:36px;text-align:center;"><span style="transform:scaleX(1.345);transform-origin:center">2012</span></div>
<div class="r" style="left:822px;top:402px;width:6px;height:1px;background:linear-gradient(90deg,#c48a48 0,#c48a48 1px,#ffc274 1px,#ffc274 2px,#f2c488 2px,#f2c488 3px,#d99a55 3px,#d99a55 4px,#b46e28 4px,#b46e28 5px,#8c5306 5px);"></div>
<div class="r" style="left:828px;top:402px;width:6px;height:1px;background:linear-gradient(90deg,#d2c26c 0,#d2c26c 1px,#e8dc84 1px,#e8dc84 2px,#eae49c 2px,#eae49c 3px,#e0dca0 3px,#e0dca0 4px,#c8c070 4px,#c8c070 5px,#a8a060 5px);"></div>
<div class="r" style="left:834px;top:402px;width:6px;height:1px;background:linear-gradient(90deg,#2a4c98 0,#2a4c98 1px,#6a9cf4 1px,#6a9cf4 2px,#7ca4f0 2px,#7ca4f0 3px,#4474d4 3px,#4474d4 4px,#1a4cb0 4px,#1a4cb0 5px,#003c90 5px);"></div>
<div class="r" style="left:840px;top:402px;width:6px;height:1px;background:linear-gradient(90deg,#40c4d0 0,#40c4d0 1px,#58ecf2 1px,#58ecf2 2px,#78fcfc 2px,#78fcfc 3px,#84e8ee 3px,#84e8ee 4px,#30b8c0 4px,#30b8c0 5px,#148c90 5px);"></div>
<div class="r" style="left:846px;top:402px;width:6px;height:1px;background:linear-gradient(90deg,#2a8070 0,#206858 100%);"></div>
<div class="t" style="left:819px;top:407.69px;font-size:11px;color:#000;width:36px;text-align:center;"><span style="transform:scaleX(1.171);transform-origin:center">Ott</span></div>
<div class="t" style="left:819px;top:420.69px;font-size:11px;color:#000;width:36px;text-align:center;"><span style="transform:scaleX(1.157);transform-origin:center">2012</span></div>
<div class="r" style="left:856px;top:402px;width:6px;height:1px;background:linear-gradient(90deg,#c48a48 0,#c48a48 1px,#ffc274 1px,#ffc274 2px,#f2c488 2px,#f2c488 3px,#d99a55 3px,#d99a55 4px,#b46e28 4px,#b46e28 5px,#8c5306 5px);"></div>
<div class="r" style="left:862px;top:402px;width:6px;height:1px;background:linear-gradient(90deg,#d2c26c 0,#d2c26c 1px,#e8dc84 1px,#e8dc84 2px,#eae49c 2px,#eae49c 3px,#e0dca0 3px,#e0dca0 4px,#c8c070 4px,#c8c070 5px,#a8a060 5px);"></div>
<div class="r" style="left:868px;top:402px;width:6px;height:1px;background:linear-gradient(90deg,#2a4c98 0,#2a4c98 1px,#6a9cf4 1px,#6a9cf4 2px,#7ca4f0 2px,#7ca4f0 3px,#4474d4 3px,#4474d4 4px,#1a4cb0 4px,#1a4cb0 5px,#003c90 5px);"></div>
<div class="r" style="left:874px;top:402px;width:6px;height:1px;background:linear-gradient(90deg,#40c4d0 0,#40c4d0 1px,#58ecf2 1px,#58ecf2 2px,#78fcfc 2px,#78fcfc 3px,#84e8ee 3px,#84e8ee 4px,#30b8c0 4px,#30b8c0 5px,#148c90 5px);"></div>
<div class="r" style="left:880px;top:402px;width:6px;height:1px;background:linear-gradient(90deg,#2a8070 0,#206858 100%);"></div>
<div class="t" style="left:853px;top:407.69px;font-size:11px;color:#000;width:36px;text-align:center;"><span style="transform:scaleX(1.138);transform-origin:center">Nov</span></div>
<div class="t" style="left:853px;top:420.69px;font-size:11px;color:#000;width:36px;text-align:center;"><span style="transform:scaleX(1.157);transform-origin:center">2012</span></div>
<div class="r" style="left:890px;top:402px;width:6px;height:1px;background:linear-gradient(90deg,#c48a48 0,#c48a48 1px,#ffc274 1px,#ffc274 2px,#f2c488 2px,#f2c488 3px,#d99a55 3px,#d99a55 4px,#b46e28 4px,#b46e28 5px,#8c5306 5px);"></div>
<div class="r" style="left:896px;top:402px;width:6px;height:1px;background:linear-gradient(90deg,#d2c26c 0,#d2c26c 1px,#e8dc84 1px,#e8dc84 2px,#eae49c 2px,#eae49c 3px,#e0dca0 3px,#e0dca0 4px,#c8c070 4px,#c8c070 5px,#a8a060 5px);"></div>
<div class="r" style="left:902px;top:402px;width:6px;height:1px;background:linear-gradient(90deg,#2a4c98 0,#2a4c98 1px,#6a9cf4 1px,#6a9cf4 2px,#7ca4f0 2px,#7ca4f0 3px,#4474d4 3px,#4474d4 4px,#1a4cb0 4px,#1a4cb0 5px,#003c90 5px);"></div>
<div class="r" style="left:908px;top:402px;width:6px;height:1px;background:linear-gradient(90deg,#40c4d0 0,#40c4d0 1px,#58ecf2 1px,#58ecf2 2px,#78fcfc 2px,#78fcfc 3px,#84e8ee 3px,#84e8ee 4px,#30b8c0 4px,#30b8c0 5px,#148c90 5px);"></div>
<div class="r" style="left:914px;top:402px;width:6px;height:1px;background:linear-gradient(90deg,#2a8070 0,#206858 100%);"></div>
<div class="t" style="left:887px;top:407.69px;font-size:11px;color:#000;width:36px;text-align:center;"><span style="transform:scaleX(1.084);transform-origin:center">Dic</span></div>
<div class="t" style="left:887px;top:420.69px;font-size:11px;color:#000;width:36px;text-align:center;"><span style="transform:scaleX(1.157);transform-origin:center">2012</span></div>
<div class="r" style="left:466px;top:451px;width:82px;height:28px;background:#ECECEC;box-shadow:inset 0 0 0 1px rgba(0,0,0,0);"></div>
<div class="r" style="left:550px;top:451px;width:82px;height:28px;background:#FFAA66;box-shadow:inset 0 0 0 1px rgba(0,0,0,0.05);"></div>
<div class="r" style="left:634px;top:451px;width:82px;height:28px;background:#F4F090;box-shadow:inset 0 0 0 1px rgba(0,0,0,0.02);"></div>
<div class="r" style="left:718px;top:451px;width:82px;height:28px;background:#4477DD;box-shadow:inset 0 0 0 1px rgba(0,0,0,0.13);"></div>
<div class="r" style="left:802px;top:451px;width:82px;height:28px;background:#66DDEE;box-shadow:inset 0 0 0 1px rgba(0,0,0,0.04);"></div>
<div class="r" style="left:886px;top:451px;width:82px;height:28px;background:#2EA495;box-shadow:inset 0 0 0 1px rgba(0,0,0,0.1);"></div>
<div class="t" style="left:466px;top:459.69px;font-size:11px;color:#000;width:82px;text-align:center;"><span style="transform:scaleX(1.091);transform-origin:center">Mese</span></div>
<div class="t" style="left:550px;top:452.69px;font-size:11px;color:#000;width:82px;text-align:center;"><span style="transform:scaleX(1.205);transform-origin:center">Visitatori</span></div>
<div class="t" style="left:550px;top:465.69px;font-size:11px;color:#000;width:82px;text-align:center;"><span style="transform:scaleX(1.210);transform-origin:center">diversi</span></div>
<div class="t" style="left:634px;top:452.69px;font-size:11px;color:#000;width:82px;text-align:center;"><span style="transform:scaleX(1.177);transform-origin:center">Numero di</span></div>
<div class="t" style="left:634px;top:465.69px;font-size:11px;color:#000;width:82px;text-align:center;"><span style="transform:scaleX(1.211);transform-origin:center">visite</span></div>
<div class="t" style="left:718px;top:459.69px;font-size:11px;color:#000;width:82px;text-align:center;"><span style="transform:scaleX(1.122);transform-origin:center">Pagine</span></div>
<div class="t" style="left:802px;top:459.69px;font-size:11px;color:#000;width:82px;text-align:center;"><span style="transform:scaleX(1.121);transform-origin:center">Accessi</span></div>
<div class="t" style="left:886px;top:459.69px;font-size:11px;color:#000;width:82px;text-align:center;"><span style="transform:scaleX(1.162);transform-origin:center">Banda usata</span></div>
<div class="t" style="left:466px;top:483.19px;font-size:11px;color:#000;width:82px;text-align:center;"><span style="transform:scaleX(1.151);transform-origin:center">Gen 2012</span></div>
<div class="t" style="left:550px;top:483.19px;font-size:11px;color:#000;width:82px;text-align:center;"><span style="transform:scaleX(1.175);transform-origin:center">1.274</span></div>
<div class="t" style="left:634px;top:483.19px;font-size:11px;color:#000;width:82px;text-align:center;"><span style="transform:scaleX(1.175);transform-origin:center">1.622</span></div>
<div class="t" style="left:718px;top:483.19px;font-size:11px;color:#000;width:82px;text-align:center;"><span style="transform:scaleX(1.175);transform-origin:center">5.980</span></div>
<div class="t" style="left:802px;top:483.19px;font-size:11px;color:#000;width:82px;text-align:center;"><span style="transform:scaleX(1.172);transform-origin:center">59.097</span></div>
<div class="t" style="left:886px;top:483.19px;font-size:11px;color:#000;width:82px;text-align:center;"><span style="transform:scaleX(1.157);transform-origin:center">0</span></div>
<div class="t" style="left:466px;top:500.19px;font-size:11px;color:#000;width:82px;text-align:center;"><span style="transform:scaleX(1.131);transform-origin:center">Feb 2012</span></div>
<div class="t" style="left:550px;top:500.19px;font-size:11px;color:#000;width:82px;text-align:center;"><span style="transform:scaleX(1.175);transform-origin:center">1.334</span></div>
<div class="t" style="left:634px;top:500.19px;font-size:11px;color:#000;width:82px;text-align:center;"><span style="transform:scaleX(1.175);transform-origin:center">1.672</span></div>
<div class="t" style="left:718px;top:500.19px;font-size:11px;color:#000;width:82px;text-align:center;"><span style="transform:scaleX(1.175);transform-origin:center">5.951</span></div>
<div class="t" style="left:802px;top:500.19px;font-size:11px;color:#000;width:82px;text-align:center;"><span style="transform:scaleX(1.172);transform-origin:center">58.415</span></div>
<div class="t" style="left:886px;top:500.19px;font-size:11px;color:#000;width:82px;text-align:center;"><span style="transform:scaleX(1.157);transform-origin:center">0</span></div>
<div class="t" style="left:466px;top:517.19px;font-size:11px;color:#000;width:82px;text-align:center;"><span style="transform:scaleX(1.153);transform-origin:center">Mar 2012</span></div>
<div class="t" style="left:550px;top:517.19px;font-size:11px;color:#000;width:82px;text-align:center;"><span style="transform:scaleX(1.175);transform-origin:center">1.202</span></div>
<div class="t" style="left:634px;top:517.19px;font-size:11px;color:#000;width:82px;text-align:center;"><span style="transform:scaleX(1.175);transform-origin:center">1.519</span></div>
<div class="t" style="left:718px;top:517.19px;font-size:11px;color:#000;width:82px;text-align:center;"><span style="transform:scaleX(1.175);transform-origin:center">5.641</span></div>
<div class="t" style="left:802px;top:517.19px;font-size:11px;color:#000;width:82px;text-align:center;"><span style="transform:scaleX(1.172);transform-origin:center">53.146</span></div>
<div class="t" style="left:886px;top:517.19px;font-size:11px;color:#000;width:82px;text-align:center;"><span style="transform:scaleX(1.157);transform-origin:center">0</span></div>
<div class="t" style="left:466px;top:534.19px;font-size:11px;color:#000;width:82px;text-align:center;"><span style="transform:scaleX(1.178);transform-origin:center">Apr 2012</span></div>
<div class="t" style="left:550px;top:534.19px;font-size:11px;color:#000;width:82px;text-align:center;"><span style="transform:scaleX(1.157);transform-origin:center">989</span></div>
<div class="t" style="left:634px;top:534.19px;font-size:11px;color:#000;width:82px;text-align:center;"><span style="transform:scaleX(1.175);transform-origin:center">1.291</span></div>
<div class="t" style="left:718px;top:534.19px;font-size:11px;color:#000;width:82px;text-align:center;"><span style="transform:scaleX(1.175);transform-origin:center">4.370</span></div>
<div class="t" style="left:802px;top:534.19px;font-size:11px;color:#000;width:82px;text-align:center;"><span style="transform:scaleX(1.172);transform-origin:center">44.834</span></div>
<div class="t" style="left:886px;top:534.19px;font-size:11px;color:#000;width:82px;text-align:center;"><span style="transform:scaleX(1.157);transform-origin:center">0</span></div>
<div class="t" style="left:466px;top:551.19px;font-size:11px;color:#000;width:82px;text-align:center;"><span style="transform:scaleX(1.137);transform-origin:center">Mag 2012</span></div>
<div class="t" style="left:550px;top:551.19px;font-size:11px;color:#000;width:82px;text-align:center;"><span style="transform:scaleX(1.175);transform-origin:center">1.302</span></div>
<div class="t" style="left:634px;top:551.19px;font-size:11px;color:#000;width:82px;text-align:center;"><span style="transform:scaleX(1.175);transform-origin:center">1.737</span></div>
<div class="t" style="left:718px;top:551.19px;font-size:11px;color:#000;width:82px;text-align:center;"><span style="transform:scaleX(1.175);transform-origin:center">6.054</span></div>
<div class="t" style="left:802px;top:551.19px;font-size:11px;color:#000;width:82px;text-align:center;"><span style="transform:scaleX(1.172);transform-origin:center">64.631</span></div>
<div class="t" style="left:886px;top:551.19px;font-size:11px;color:#000;width:82px;text-align:center;"><span style="transform:scaleX(1.157);transform-origin:center">0</span></div>
<div class="t" style="left:466px;top:568.19px;font-size:11px;color:#000;width:82px;text-align:center;"><span style="transform:scaleX(1.155);transform-origin:center">Giu 2012</span></div>
<div class="t" style="left:550px;top:568.19px;font-size:11px;color:#000;width:82px;text-align:center;"><span style="transform:scaleX(1.175);transform-origin:center">1.045</span></div>
<div class="t" style="left:634px;top:568.19px;font-size:11px;color:#000;width:82px;text-align:center;"><span style="transform:scaleX(1.175);transform-origin:center">1.290</span></div>
<div class="t" style="left:718px;top:568.19px;font-size:11px;color:#000;width:82px;text-align:center;"><span style="transform:scaleX(1.175);transform-origin:center">4.345</span></div>
<div class="t" style="left:802px;top:568.19px;font-size:11px;color:#000;width:82px;text-align:center;"><span style="transform:scaleX(1.172);transform-origin:center">42.666</span></div>
<div class="t" style="left:886px;top:568.19px;font-size:11px;color:#000;width:82px;text-align:center;"><span style="transform:scaleX(1.157);transform-origin:center">0</span></div>
<div class="t" style="left:466px;top:585.19px;font-size:11px;color:#000;width:82px;text-align:center;"><span style="transform:scaleX(1.146);transform-origin:center">Lug 2012</span></div>
<div class="t" style="left:550px;top:585.19px;font-size:11px;color:#000;width:82px;text-align:center;"><span style="transform:scaleX(1.157);transform-origin:center">886</span></div>
<div class="t" style="left:634px;top:585.19px;font-size:11px;color:#000;width:82px;text-align:center;"><span style="transform:scaleX(1.175);transform-origin:center">1.178</span></div>
<div class="t" style="left:718px;top:585.19px;font-size:11px;color:#000;width:82px;text-align:center;"><span style="transform:scaleX(1.175);transform-origin:center">3.856</span></div>
<div class="t" style="left:802px;top:585.19px;font-size:11px;color:#000;width:82px;text-align:center;"><span style="transform:scaleX(1.172);transform-origin:center">37.290</span></div>
<div class="t" style="left:886px;top:585.19px;font-size:11px;color:#000;width:82px;text-align:center;"><span style="transform:scaleX(1.157);transform-origin:center">0</span></div>
<div class="r" style="left:242px;top:589px;width:949px;height:6px;background:linear-gradient(#e2e2e2 0,#e2e2e2 1px,#efefef 1px);"></div>
<div class="r" style="left:250px;top:593px;width:3px;height:2px;background:#404040;"></div>
</body></html>
